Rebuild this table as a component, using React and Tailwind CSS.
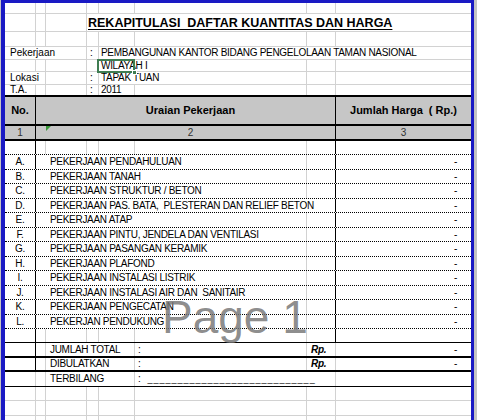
import React from "react";

const font = { fontFamily: '"Liberation Sans", Arial, sans-serif' };

const lines = {
  light: "border-r border-[#d2d2d2]",
  black: "border-r border-black",
  none: "",
};

const bottoms = {
  light: "border-b border-[#d2d2d2]",
  dotted: "border-b border-dotted border-black",
  black: "border-b border-black",
  thick: "border-b-2 border-black",
};

const Cell = ({ w, line = "light", className = "", children }) => (
  <div className={`${w} ${lines[line]} shrink-0 flex items-center whitespace-pre ${className}`}>
    {children}
  </div>
);

const Row = ({ h, bottom = "light", className = "", children }) => (
  <div className={`${h} ${bottoms[bottom]} flex shrink-0 ${className}`}>{children}</div>
);

// full set of empty gridline cells
const EmptyCells = ({ first = "light", g = "light" }) => (
  <>
    <Cell w="w-[31px]" line={first} />
    <Cell w="w-[10px]" />
    <Cell w="w-[41px]" />
    <Cell w="w-[12px]" />
    <Cell w="w-[36px]" />
    <Cell w="w-[172px]" />
    <Cell w="w-[29px]" line={g} />
    <Cell w="w-[135px]" line="none" />
  </>
);

const items = [
  ["A.", "PEKERJAAN PENDAHULUAN"],
  ["B.", "PEKERJAAN TANAH"],
  ["C.", "PEKERJAAN STRUKTUR / BETON"],
  ["D.", "PEKERJAAN PAS. BATA,  PLESTERAN DAN RELIEF BETON"],
  ["E.", "PEKERJAAN ATAP"],
  ["F.", "PEKERJAAN PINTU, JENDELA DAN VENTILASI"],
  ["G.", "PEKERJAAN PASANGAN KERAMIK"],
  ["H.", "PEKERJAAN PLAFOND"],
  ["I.", "PEKERJAAN INSTALASI LISTRIK"],
  ["J.", "PEKERJAAN INSTALASI AIR DAN  SANITAIR"],
  ["K.", "PEKERJAAN PENGECATAN"],
  ["L.", "PEKERJAN PENDUKUNG"],
];

export default function App() {
  return (
    <div
      style={font}
      className="relative w-[477px] h-[420px] overflow-hidden bg-[#c4c4c4] pl-[1px] text-[10px] tracking-[-0.3px] leading-none text-black"
    >
      <div className="w-[473px] h-[430px] bg-white border-t-[3px] border-l-4 border-r-[3px] border-[#1a1ac4] flex flex-col">
        <Row h="h-[11px]">
          <EmptyCells />
        </Row>
        <Row h="h-[18px]">
          <Cell w="w-[31px]" />
          <Cell w="w-[10px]" />
          <Cell w="w-[41px]" />
          <Cell w="w-[384px]" line="none" className="pl-[1px] pt-[1px]">
            <span className="text-[12.5px] font-bold underline underline-offset-2 tracking-normal">
              REKAPITULASI  DAFTAR KUANTITAS DAN HARGA
            </span>
          </Cell>
        </Row>
        <Row h="h-[15px]">
          <EmptyCells />
        </Row>
        <Row h="h-[13px]">
          <Cell w="w-[82px]" className="pl-[5px] tracking-normal">Pekerjaan</Cell>
          <Cell w="w-[12px]" className="pl-[3px]">:</Cell>
          <Cell w="w-[372px]" line="none" className="pl-[2px]">
            PEMBANGUNAN KANTOR BIDANG PENGELOLAAN TAMAN NASIONAL
          </Cell>
        </Row>
        <Row h="h-[12px]">
          <Cell w="w-[31px]" />
          <Cell w="w-[10px]" />
          <Cell w="w-[41px]" />
          <Cell w="w-[12px]" />
          <Cell w="w-[208px]" className="pl-[2px]">WILAYAH I</Cell>
          <Cell w="w-[29px]" />
          <Cell w="w-[135px]" line="none" />
        </Row>
        <Row h="h-[13px]">
          <Cell w="w-[41px]" className="pl-[5px] tracking-normal">Lokasi</Cell>
          <Cell w="w-[41px]" />
          <Cell w="w-[12px]" className="pl-[3px]">:</Cell>
          <Cell w="w-[208px]" className="pl-[2px]">TAPAK TUAN</Cell>
          <Cell w="w-[29px]" />
          <Cell w="w-[135px]" line="none" />
        </Row>
        <Row h="h-[12px]" bottom="thick">
          <Cell w="w-[31px]" className="pl-[5px] tracking-normal">T.A.</Cell>
          <Cell w="w-[10px]" />
          <Cell w="w-[41px]" />
          <Cell w="w-[12px]" className="pl-[3px]">:</Cell>
          <Cell w="w-[36px]" className="pl-[2px]">2011</Cell>
          <Cell w="w-[172px]" />
          <Cell w="w-[29px]" />
          <Cell w="w-[135px]" line="none" />
        </Row>

        <Row h="h-[29px]" bottom="thick" className="bg-[#c6c6c6] font-bold text-[11px] tracking-normal">
          <Cell w="w-[31px]" line="black" className="justify-center">No.</Cell>
          <Cell w="w-[300px]" line="black" className="justify-center pl-[10px]">Uraian Pekerjaan</Cell>
          <Cell w="w-[135px]" line="none" className="justify-center">Jumlah Harga  ( Rp.)</Cell>
        </Row>
        <Row h="h-[15px]" bottom="thick" className="bg-[#c6c6c6] text-[#333]">
          <Cell w="w-[31px]" line="black" className="justify-center">1</Cell>
          <Cell w="w-[300px]" line="black" className="relative justify-center pl-[10px]">
            2
            <span className="absolute left-[10px] top-0 w-0 h-0 border-t-[5px] border-r-[5px] border-t-[#3a9a3a] border-r-transparent" />
          </Cell>
          <Cell w="w-[135px]" line="none" className="justify-center">3</Cell>
        </Row>

        <Row h="h-[14px]" bottom="dotted">
          <EmptyCells first="black" g="black" />
        </Row>
        {items.map(([no, text], i) => (
          <Row key={no} h={i % 2 === 0 ? "h-[15px]" : "h-[14px]"} bottom="dotted">
            <Cell w="w-[31px]" line="black" className="justify-center">{no}</Cell>
            <Cell w="w-[271px]" line={no === "D." ? "none" : "light"} className="pl-[14px] pr-0">
              <span className="overflow-visible">{text}</span>
            </Cell>
            <Cell w="w-[29px]" line="black" />
            <Cell w="w-[135px]" line="none" className="justify-end pr-[14px]">-</Cell>
          </Row>
        ))}
        <Row h="h-[14px]" bottom="black">
          <EmptyCells first="black" g="black" />
        </Row>

        <Row h="h-[15px]" bottom="thick">
          <Cell w="w-[31px]" line="black" />
          <Cell w="w-[10px]" />
          <Cell w="w-[89px]" className="pl-[4px]">JUMLAH TOTAL</Cell>
          <Cell w="w-[172px]" className="pl-[3px]">:</Cell>
          <Cell w="w-[29px]" className="pl-[4px] italic font-bold">Rp.</Cell>
          <Cell w="w-[135px]" line="none" className="justify-end pr-[14px]">-</Cell>
        </Row>
        <Row h="h-[14px]" bottom="thick">
          <Cell w="w-[31px]" line="black" />
          <Cell w="w-[10px]" />
          <Cell w="w-[89px]" className="pl-[4px]">DIBULATKAN</Cell>
          <Cell w="w-[172px]" className="pl-[3px]">:</Cell>
          <Cell w="w-[29px]" className="pl-[4px] italic font-bold">Rp.</Cell>
          <Cell w="w-[135px]" line="none" className="justify-end pr-[14px]">-</Cell>
        </Row>
        <Row h="h-[15px]" bottom="black">
          <Cell w="w-[31px]" />
          <Cell w="w-[10px]" />
          <Cell w="w-[89px]" className="pl-[4px]">TERBILANG</Cell>
          <Cell w="w-[172px]" line="none" className="pl-[3px]">
            :
            <span className="ml-[7px] text-[9px] tracking-[1px]">____________________________</span>
          </Cell>
          <Cell w="w-[29px]" />
          <Cell w="w-[135px]" line="none" />
        </Row>
        <Row h="h-[14px]">
          <EmptyCells />
        </Row>
        <Row h="h-[15px]">
          <EmptyCells />
        </Row>
        <Row h="h-[14px]">
          <EmptyCells />
        </Row>
      </div>

      {/* selected cell */}
      <div className="absolute left-[97px] top-[59px] w-[38px] h-[14px] border-2 border-[#3f7d52]" />
      <div className="absolute left-[132px] top-[70px] w-[5px] h-[5px] bg-[#3f7d52] border border-white" />

      {/* page break preview watermark */}
      <div className="absolute left-[162px] top-[294px] text-[46px] leading-none tracking-normal text-[rgba(116,116,116,0.83)] whitespace-pre">
        Page 1
      </div>
    </div>
  );
}
